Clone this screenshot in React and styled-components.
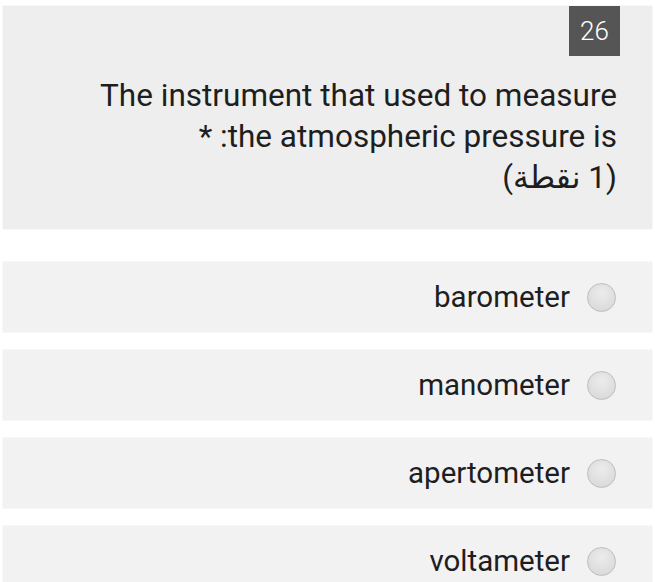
import React from 'react'
import styled, { createGlobalStyle } from 'styled-components'

const GlobalStyle = createGlobalStyle`
  html, body {
    margin: 0;
    padding: 0;
    background: #ffffff;
  }
  body {
    font-family: Roboto, "Noto Sans", "DejaVu Sans", sans-serif;
    color: #212121;
  }
`

const Page = styled.div`
  display: flex;
  flex-direction: column;
  padding: 6px 3px 0;
`

const QuestionCard = styled.div`
  background: #eeeeee;
  box-shadow: 0 0 1px rgba(0, 0, 0, 0.18);
  padding: 0 35px 31px;
  display: flex;
  flex-direction: column;
  align-items: flex-end;
`

const Badge = styled.div`
  width: 51px;
  height: 50px;
  margin-right: -3px;
  background: #555555;
  color: #ffffff;
  font-size: 26px;
  font-weight: 300;
  display: flex;
  align-items: center;
  justify-content: center;
`

const Title = styled.div`
  margin-top: 19px;
  font-size: 31.5px;
  line-height: 41px;
  text-align: right;
  color: #1e1e1e;
`

const Options = styled.div`
  display: flex;
  flex-direction: column;
  gap: 18px;
  margin-top: 33px;
`

const Option = styled.label`
  height: 70px;
  background: #f2f2f2;
  box-shadow: 0 0 1px rgba(0, 0, 0, 0.16);
  display: flex;
  flex-direction: row-reverse;
  align-items: center;
  padding-right: 36px;
  gap: 17px;
`

const Radio = styled.span`
  width: 27px;
  height: 27px;
  border-radius: 50%;
  border: 1px solid #bdbdbd;
  background: radial-gradient(circle at 50% 35%, #ececec 0%, #dcdcdc 70%, #d2d2d2 100%);
  flex-shrink: 0;
`

const OptionText = styled.span`
  font-size: 29.5px;
  color: #1e1e1e;
`

const choices = ['barometer', 'manometer', 'apertometer', 'voltameter']

export default function App() {
  return (
    <>
      <GlobalStyle />
      <Page>
        <QuestionCard>
          <Badge>26</Badge>
          <Title dir="rtl">
            The instrument that used to measure
            <br />
            the atmospheric pressure is: *
            <br />
            (1 نقطة)
          </Title>
        </QuestionCard>
        <Options>
          {choices.map((c) => (
            <Option key={c}>
              <Radio />
              <OptionText>{c}</OptionText>
            </Option>
          ))}
        </Options>
      </Page>
    </>
  )
}
